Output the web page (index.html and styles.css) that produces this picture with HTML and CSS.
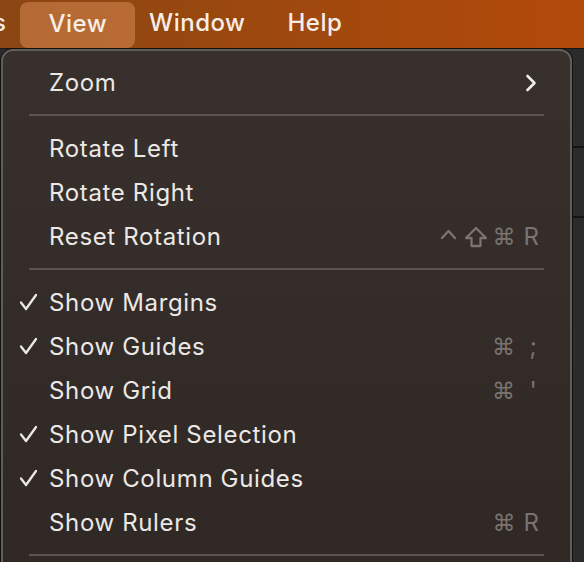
FILE: index.html
```html
<!DOCTYPE html>
<html>
<head>
<meta charset="utf-8">
<link rel="stylesheet" href="styles.css">
</head>
<body>
<div class="menubar">
  <span class="mb-item mb-cut">s</span>
  <span class="mb-item mb-active">View</span>
  <span class="mb-item">Window</span>
  <span class="mb-item">Help</span>
</div>
<div class="workspace">
  <div class="app-rows">
    <div class="app-row r1"></div>
    <div class="app-row r2"></div>
    <div class="app-row r3"></div>
  </div>
  <div class="menu">
    <div class="item"><span class="check"></span><span class="label">Zoom</span>
      <span class="shortcut chev"><svg width="12" height="18" viewBox="0 0 12 18"><path d="M2.5 2 L9.5 9 L2.5 16" fill="none" stroke="#efebe8" stroke-width="2.6" stroke-linecap="round" stroke-linejoin="round"/></svg></span></div>
    <div class="sep"></div>
    <div class="item"><span class="check"></span><span class="label">Rotate Left</span></div>
    <div class="item"><span class="check"></span><span class="label">Rotate Right</span></div>
    <div class="item"><span class="check"></span><span class="label">Reset Rotation</span>
      <span class="shortcut">
        <svg class="ic-ctl" width="17" height="12" viewBox="0 0 17 12"><path d="M2 10 L8.5 3 L15 10" fill="none" stroke="#7a7370" stroke-width="2.4" stroke-linecap="round" stroke-linejoin="round"/></svg>
        <svg class="ic-shift" width="24" height="22" viewBox="0 0 24 22"><path d="M12 2 L22 12 L16.5 12 L16.5 20 L7.5 20 L7.5 12 L2 12 Z" fill="none" stroke="#7a7370" stroke-width="2.3" stroke-linejoin="round"/></svg>
        <span class="sym">⌘</span><span class="key">R</span></span></div>
    <div class="sep"></div>
    <div class="item"><span class="check"><svg width="19" height="18" viewBox="0 0 19 18"><path d="M2 9.5 L7 16 L17 2" fill="none" stroke="#ece8e5" stroke-width="2.3" stroke-linecap="round" stroke-linejoin="round"/></svg></span><span class="label">Show Margins</span></div>
    <div class="item"><span class="check"><svg width="19" height="18" viewBox="0 0 19 18"><path d="M2 9.5 L7 16 L17 2" fill="none" stroke="#ece8e5" stroke-width="2.3" stroke-linecap="round" stroke-linejoin="round"/></svg></span><span class="label">Show Guides</span>
      <span class="shortcut"><span class="sym">⌘</span><span class="key punct">;</span></span></div>
    <div class="item"><span class="check"></span><span class="label">Show Grid</span>
      <span class="shortcut"><span class="sym">⌘</span><span class="key punct">'</span></span></div>
    <div class="item"><span class="check"><svg width="19" height="18" viewBox="0 0 19 18"><path d="M2 9.5 L7 16 L17 2" fill="none" stroke="#ece8e5" stroke-width="2.3" stroke-linecap="round" stroke-linejoin="round"/></svg></span><span class="label">Show Pixel Selection</span></div>
    <div class="item"><span class="check"><svg width="19" height="18" viewBox="0 0 19 18"><path d="M2 9.5 L7 16 L17 2" fill="none" stroke="#ece8e5" stroke-width="2.3" stroke-linecap="round" stroke-linejoin="round"/></svg></span><span class="label">Show Column Guides</span></div>
    <div class="item"><span class="check"></span><span class="label">Show Rulers</span>
      <span class="shortcut"><span class="sym">⌘</span><span class="key">R</span></span></div>
    <div class="sep"></div>
  </div>
</div>
</body>
</html>
```

FILE: styles.css
```css
* { box-sizing: border-box; }
html, body { margin: 0; padding: 0; }
body {
  width: 584px;
  height: 562px;
  overflow: hidden;
  background: #2b2b2c;
  font-family: "Inter", "Noto Sans", sans-serif;
  -webkit-font-smoothing: antialiased;
}
.menubar {
  height: 49px;
  display: flex;
  align-items: center;
  background: linear-gradient(90deg, #8a4614 0%, #98480f 35%, #a8490d 70%, #b34a0b 100%);
  border-bottom: 1px solid #1c1410;
  color: #f6eee8;
  font-size: 24px;
  font-weight: 500;
  letter-spacing: 0.5px;
}
.mb-item {
  padding: 0 21px;
  height: 47px;
  display: flex;
  align-items: center;
  padding-bottom: 3px;
}
.mb-cut { margin-left: -28px; }
.mb-active {
  padding: 0 28px 3px;
  margin: 1px -7px 0;
  background: rgba(230, 150, 95, 0.45);
  border-radius: 8px;
  height: 46px;
}
.workspace {
  position: relative;
  height: 513px;
}
.app-rows {
  display: flex;
  flex-direction: column;
}
.app-row { border-bottom: 2px solid #141414; }
.r1 { height: 99px; }
.r2 { height: 70px; }
.r3 { height: 100px; border-bottom: none; }
.menu {
  position: absolute;
  left: 1px;
  top: 0;
  width: 571px;
  height: 530px;
  background: linear-gradient(180deg, #37302d 0%, #322b28 60%, #2f2825 100%);
  border: 2px solid #635d5a;
  border-radius: 12px;
  box-shadow: 0 0 0 1px #111;
  padding-top: 9px;
  color: #ece8e5;
  font-size: 24px;
  font-weight: 400;
}
.item {
  height: 44px;
  display: flex;
  align-items: center;
  padding-right: 31px;
}
.check {
  width: 46px;
  padding-left: 16px;
  display: flex;
  align-items: center;
}
.label { flex: 1; letter-spacing: 0.65px; padding-top: 1px; }
.shortcut {
  display: flex;
  align-items: center;
  color: #7a7370;
  font-size: 24px;
  padding-top: 1px;
}
.ic-ctl { margin-right: 7px; margin-top: -6px; }
.ic-shift { margin-right: 5px; }
.sym { font-family: "DejaVu Sans", sans-serif; font-size: 23px; }
.key { margin-left: 8px; }
.punct { width: 12px; text-align: center; margin-left: 12px; }
.chev { padding-right: 2px; }
.sep {
  height: 22px;
  display: flex;
  align-items: center;
  padding: 0 26px;
}
.sep::after {
  content: "";
  flex: 1;
  height: 2px;
  background: #5b5451;
}
```
